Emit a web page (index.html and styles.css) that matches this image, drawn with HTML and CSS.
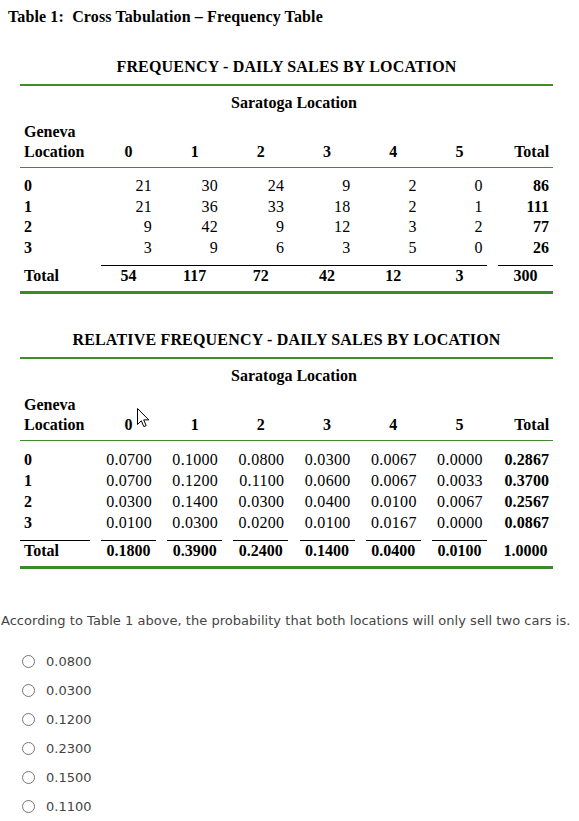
FILE: index.html
```html
<!DOCTYPE html>
<html>
<head>
<meta charset="utf-8">
<link rel="stylesheet" href="styles.css">
</head>
<body>
<h1 class="caption">Table 1:&nbsp; Cross Tabulation – Frequency Table</h1>

<section class="xtab">
  <h2 class="xtitle">FREQUENCY - DAILY SALES BY LOCATION</h2>
  <div class="gline"></div>
  <div class="grid sara"><div class="sara-label">Saratoga Location</div></div>
  <div class="grid head">
    <div class="rh">Geneva<br>Location</div>
    <div class="ch">0</div><div class="ch">1</div><div class="ch">2</div><div class="ch">3</div><div class="ch">4</div><div class="ch">5</div>
    <div class="ch right">Total</div>
  </div>
  <div class="hline"></div>
  <div class="rows">
    <div class="grid row"><div class="rh">0</div><div class="n">21</div><div class="n">30</div><div class="n">24</div><div class="n">9</div><div class="n">2</div><div class="n">0</div><div class="n b">86</div></div>
    <div class="grid row"><div class="rh">1</div><div class="n">21</div><div class="n">36</div><div class="n">33</div><div class="n">18</div><div class="n">2</div><div class="n">1</div><div class="n b">111</div></div>
    <div class="grid row"><div class="rh">2</div><div class="n">9</div><div class="n">42</div><div class="n">9</div><div class="n">12</div><div class="n">3</div><div class="n">2</div><div class="n b">77</div></div>
    <div class="grid row"><div class="rh">3</div><div class="n">3</div><div class="n">9</div><div class="n">6</div><div class="n">3</div><div class="n">5</div><div class="n">0</div><div class="n b">26</div></div>
  </div>
  <div class="grid ulines"><div class="useg wide"></div><div class="useg last"></div></div>
  <div class="grid row total">
    <div class="rh">Total</div><div class="c">54</div><div class="c">117</div><div class="c">72</div><div class="c">42</div><div class="c">12</div><div class="c">3</div><div class="c">300</div>
  </div>
  <div class="gline thick"></div>
</section>

<section class="xtab second">
  <h2 class="xtitle">RELATIVE FREQUENCY - DAILY SALES BY LOCATION</h2>
  <div class="gline"></div>
  <div class="grid sara"><div class="sara-label">Saratoga Location</div></div>
  <div class="grid head">
    <div class="rh">Geneva<br>Location</div>
    <div class="ch">0</div><div class="ch">1</div><div class="ch">2</div><div class="ch">3</div><div class="ch">4</div><div class="ch">5</div>
    <div class="ch right">Total</div>
  </div>
  <div class="hline"></div>
  <div class="rows">
    <div class="grid row"><div class="rh">0</div><div class="n">0.0700</div><div class="n">0.1000</div><div class="n">0.0800</div><div class="n">0.0300</div><div class="n">0.0067</div><div class="n">0.0000</div><div class="n b">0.2867</div></div>
    <div class="grid row"><div class="rh">1</div><div class="n">0.0700</div><div class="n">0.1200</div><div class="n">0.1100</div><div class="n">0.0600</div><div class="n">0.0067</div><div class="n">0.0033</div><div class="n b">0.3700</div></div>
    <div class="grid row"><div class="rh">2</div><div class="n">0.0300</div><div class="n">0.1400</div><div class="n">0.0300</div><div class="n">0.0400</div><div class="n">0.0100</div><div class="n">0.0067</div><div class="n b">0.2567</div></div>
    <div class="grid row"><div class="rh">3</div><div class="n">0.0100</div><div class="n">0.0300</div><div class="n">0.0200</div><div class="n">0.0100</div><div class="n">0.0167</div><div class="n">0.0000</div><div class="n b">0.0867</div></div>
  </div>
  <div class="grid ulines"><div class="useg"></div><div class="useg"></div><div class="useg"></div><div class="useg"></div><div class="useg"></div><div class="useg"></div><div class="useg"></div></div>
  <div class="grid row total">
    <div class="rh">Total</div><div class="c">0.1800</div><div class="c">0.3900</div><div class="c">0.2400</div><div class="c">0.1400</div><div class="c">0.0400</div><div class="c">0.0100</div><div class="c">1.0000</div>
  </div>
  <div class="gline thick"></div>
  <svg class="cursor" width="13" height="21" viewBox="0 0 13 21"><path d="M0.5 0.5 L0.5 16.5 L4.3 12.8 L6.8 18.6 L9.2 17.6 L6.7 11.9 L11.8 11.9 Z" fill="#fff" stroke="#000" stroke-width="1"/></svg>
</section>

<p class="question">According to Table 1 above, the probability that both locations will only sell two cars is.</p>
<ul class="options">
  <li><span class="radio"></span>0.0800</li>
  <li><span class="radio"></span>0.0300</li>
  <li><span class="radio"></span>0.1200</li>
  <li><span class="radio"></span>0.2300</li>
  <li><span class="radio"></span>0.1500</li>
  <li><span class="radio"></span>0.1100</li>
</ul>
</body>
</html>
```

FILE: styles.css
```css
html, body {
  margin: 0;
  padding: 0;
  background: #fff;
}
body {
  font-family: "Liberation Serif", "Times New Roman", serif;
  font-size: 16px;
  color: #000;
}
.caption {
  margin: 0;
  padding: 8px 0 0 8px;
  font-size: 16px;
  line-height: 18px;
  font-weight: bold;
  letter-spacing: 0.12px;
}
.xtab {
  position: relative;
  width: 533px;
  margin: 32px 0 0 20px;
}
.xtab.second {
  margin-top: 37px;
}
.xtitle {
  margin: 0 0 8px;
  text-align: center;
  font-size: 16px;
  line-height: 18px;
  font-weight: bold;
  letter-spacing: 0.18px;
}
.gline {
  height: 2px;
  background: #3f8c2b;
}
.gline.thick {
  height: 3px;
  margin-top: 5px;
  background: #3a8a27;
}
.grid {
  display: grid;
  grid-template-columns: 69.8px repeat(7, 55px);
  column-gap: 11.2px;
}
.sara {
  padding-top: 8px;
  line-height: 18px;
  font-weight: bold;
}
.sara-label {
  grid-column: 2 / 8;
  text-align: center;
}
.head {
  margin-top: 10px;
  line-height: 20px;
  font-weight: bold;
  align-items: end;
}
.rh {
  padding-left: 4px;
  font-weight: bold;
}
.ch {
  text-align: center;
}
.ch.right {
  text-align: right;
  padding-right: 4px;
}
.hline {
  height: 1px;
  margin-top: 5px;
  background: #3f8c2b;
}
.rows {
  padding-top: 8px;
}
.row {
  line-height: 20.5px;
}
.second .row {
  line-height: 21px;
}
.n {
  text-align: right;
  padding-right: 4px;
  letter-spacing: 0.3px;
}
.b {
  font-weight: bold;
  letter-spacing: 0.1px;
}
.ulines {
  height: 1px;
  margin-top: 7px;
}
.useg {
  background: #000;
}
.useg.wide {
  grid-column: 2 / 8;
}
.useg.last {
  grid-column: 8 / 9;
}
.row.total {
  line-height: 20px;
  font-weight: bold;
}
.second .row.total {
  line-height: 20px;
}
.c {
  text-align: center;
}
.cursor {
  position: absolute;
  left: 117px;
  top: 77px;
}
.question {
  margin: 43px 0 0;
  padding-left: 1px;
  font-family: "DejaVu Sans", Verdana, sans-serif;
  font-size: 13px;
  line-height: 18px;
  color: #444;
  white-space: nowrap;
  letter-spacing: 0.03px;
}
.options {
  list-style: none;
  margin: 17px 0 0;
  padding: 0 0 0 22px;
  font-family: "DejaVu Sans", Verdana, sans-serif;
  font-size: 13px;
  color: #444;
}
.options li {
  display: flex;
  align-items: center;
  height: 29px;
}
.radio {
  box-sizing: border-box;
  width: 13px;
  height: 13px;
  border: 1px solid #767676;
  border-radius: 50%;
  background: #fff;
  margin-right: 11px;
}
```
